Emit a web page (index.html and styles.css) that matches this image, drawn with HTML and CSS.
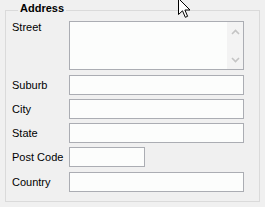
FILE: index.html
```html
<!DOCTYPE html>
<html>
<head>
<meta charset="utf-8">
<link rel="stylesheet" href="styles.css">
</head>
<body>
<fieldset class="group">
  <legend class="group-title">Address</legend>
  <div class="form">
    <label class="lbl lbl-top">Street</label>
    <div class="memo">
      <div class="memo-text"></div>
      <div class="memo-scroll">
        <svg width="9" height="6" viewBox="0 0 9 6"><path d="M1 5 L4.5 1.5 L8 5" fill="none" stroke="#c4c4c4" stroke-width="1.6"/></svg>
        <svg width="9" height="6" viewBox="0 0 9 6"><path d="M1 1 L4.5 4.5 L8 1" fill="none" stroke="#c4c4c4" stroke-width="1.6"/></svg>
      </div>
    </div>
    <label class="lbl">Suburb</label>
    <div class="box"></div>
    <label class="lbl">City</label>
    <div class="box"></div>
    <label class="lbl">State</label>
    <div class="box"></div>
    <label class="lbl">Post Code</label>
    <div class="box box-short"></div>
    <label class="lbl lbl-last">Country</label>
    <div class="box box-last"></div>
  </div>
</fieldset>
<svg class="cursor" width="14" height="21" viewBox="0 0 14 21"><path d="M0.5 0.5 L0.5 16.5 L4.5 12.8 L7.3 19.3 L9.6 18.3 L6.9 12 L12 12 Z" fill="#fff" stroke="#000" stroke-width="1" stroke-linejoin="miter"/></svg>
</body>
</html>
```
FILE: styles.css
```css
html, body {
  margin: 0;
  padding: 0;
  background: #f0f0f0;
}
body {
  position: relative;
  width: 265px;
  height: 207px;
  overflow: hidden;
  font-family: "Liberation Sans", Arial, sans-serif;
  font-size: 11px;
  color: #000;
}
.group {
  box-sizing: border-box;
  margin: 2px 0 0 5px;
  width: 255px;
  height: 200px;
  padding: 3px 0 0 6px;
  border: 1px solid #dadada;
  border-radius: 0;
}
.group-title {
  margin-left: 6px;
  padding: 0 2px 3px 2px;
  font-weight: bold;
  font-size: 11px;
  line-height: 13px;
}
.form {
  display: grid;
  grid-template-columns: 57px 175px;
  row-gap: 4px;
}
.lbl {
  display: flex;
  align-items: center;
  line-height: 13px;
  white-space: nowrap;
}
.lbl-top {
  align-items: flex-start;
  padding-top: 0;
}
.memo {
  box-sizing: border-box;
  height: 49px;
  margin-bottom: 1px;
  border: 1px solid #abadb3;
  background: #fcfdfc;
  display: flex;
}
.memo-text {
  flex: 1;
}
.memo-scroll {
  width: 16px;
  background: #f3f3f3;
  display: flex;
  flex-direction: column;
  justify-content: space-between;
  align-items: center;
  padding: 7px 0 6px 0;
}
.memo-scroll svg {
  display: block;
}
.box {
  box-sizing: border-box;
  height: 20px;
  border: 1px solid #abadb3;
  background: #fcfdfc;
}
.box-short {
  width: 76px;
}
.lbl-last,
.box-last {
  margin-top: 1px;
}
.cursor {
  position: absolute;
  left: 178px;
  top: -2px;
}
```
